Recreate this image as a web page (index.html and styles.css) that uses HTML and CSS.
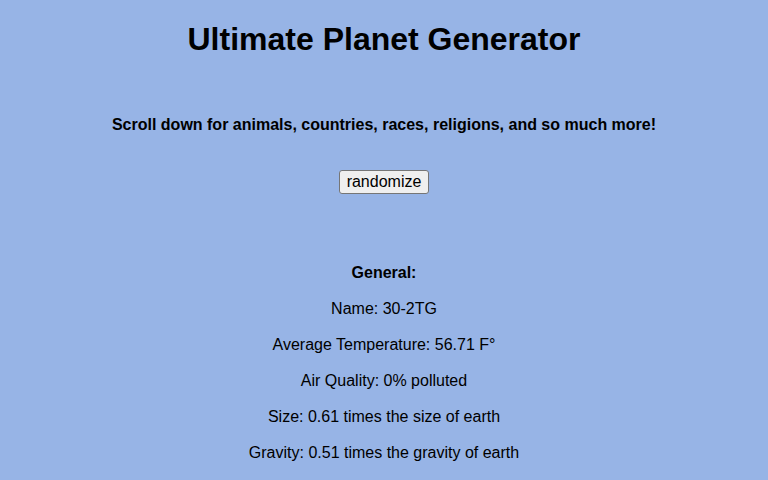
FILE: index.html
```html
<!DOCTYPE html>
<html lang="en">
<head>
    <meta charset="UTF-8">
    <title>Ultimate Planet Generator</title>
    <link rel="stylesheet" href="styles.css">
</head>
<body>
    <h1 class="title">Ultimate Planet Generator</h1>
    <p class="tagline">Scroll down for animals, countries, races, religions, and so much more!</p>

    <div class="controls">
        <button class="randomize-btn">randomize</button>
    </div>

    <!-- general planet stats -->
    <section class="section">
        <p class="section-title">General:</p>
        <p class="stat">Name: 30-2TG</p>
        <p class="stat">Average Temperature: 56.71 F&deg;</p>
        <p class="stat">Air Quality: 0% polluted</p>
        <p class="stat">Size: 0.61 times the size of earth</p>
        <p class="stat">Gravity: 0.51 times the gravity of earth</p>
    </section>
</body>
</html>
```

FILE: styles.css
```css
body {
    margin: 0;
    padding: 0 8px;
    background: #97b4e6;
    color: #000;
    font-family: "Liberation Sans", Arial, sans-serif;
    font-size: 16px;
    text-align: center;
}

/* 页面标题 */
.title {
    margin: 21px 0 0;
    font-size: 32px;
    line-height: 37px;
}

.tagline {
    margin: 58px 0 0;
    font-weight: bold;
    line-height: 18px;
}

/* 随机按钮 */
.controls {
    margin-top: 36px;
}

.randomize-btn {
    font-family: "Liberation Sans", Arial, sans-serif;
    font-size: 16px;
    line-height: 18px;
    padding: 2px 7px;
    color: #000;
    background: #efefef;
    border: 1px solid #767676;
    border-radius: 3px;
}

.section {
    margin-top: 70px;
}

.section-title {
    margin: 0;
    font-weight: bold;
    line-height: 18px;
}

.stat {
    margin: 18px 0 0;
    line-height: 18px;
}
```
